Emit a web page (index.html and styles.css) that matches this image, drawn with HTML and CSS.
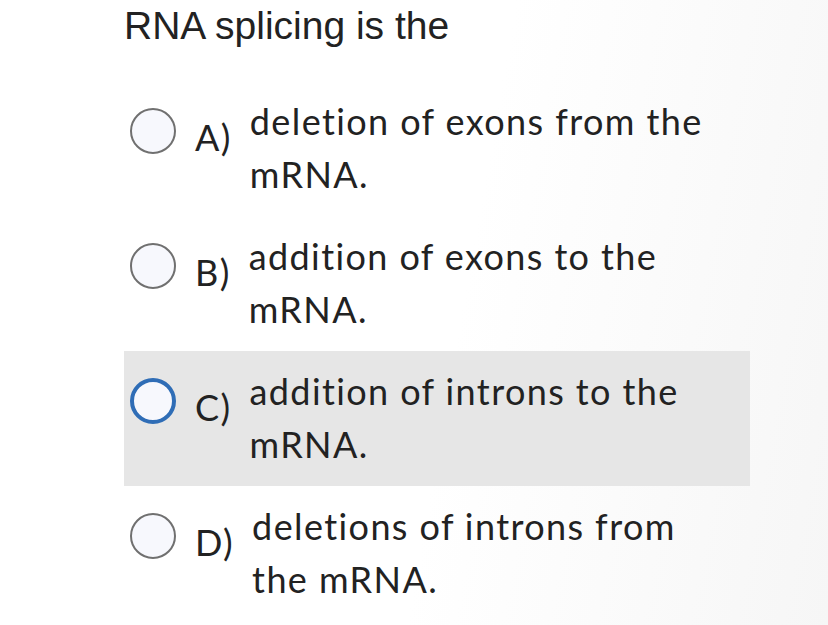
FILE: index.html
```html
<!DOCTYPE html>
<html>
<head>
<meta charset="utf-8">
<link rel="stylesheet" href="styles.css">
</head>
<body>
<div class="page">
  <h1 class="question">RNA splicing is the</h1>
  <div class="options">
    <div class="option">
      <span class="radio"></span>
      <span class="label">A)</span>
      <span class="text">deletion of exons from the<br>mRNA.</span>
    </div>
    <div class="option">
      <span class="radio"></span>
      <span class="label">B)</span>
      <span class="text">addition of exons to the<br>mRNA.</span>
    </div>
    <div class="option selected">
      <span class="radio"></span>
      <span class="label">C)</span>
      <span class="text">addition of introns to the<br>mRNA.</span>
    </div>
    <div class="option">
      <span class="radio"></span>
      <span class="label">D)</span>
      <span class="text">deletions of introns from<br>the mRNA.</span>
    </div>
  </div>
</div>
</body>
</html>
```
FILE: styles.css
```css
html, body {
  margin: 0;
  padding: 0;
}
body {
  width: 828px;
  height: 625px;
  overflow: hidden;
  background: linear-gradient(100deg, #ffffff 0%, #ffffff 55%, #f6f6f6 100%);
  color: #222;
}
.page {
  padding-left: 124px;
}
.question {
  margin: 3px 0 0 0;
  font-family: "Liberation Sans", Arial, sans-serif;
  font-weight: normal;
  font-size: 39px;
  line-height: 45px;
  height: 78px;
  color: #222;
}
.options {
  width: 626px;
  display: flex;
  flex-direction: column;
}
.option {
  height: 135px;
  display: flex;
  align-items: flex-start;
  font-family: Lato, "Open Sans", sans-serif;
  font-size: 36px;
  line-height: 53px;
  letter-spacing: 1.4px;
  color: #222;
}
.option.selected {
  background: #e6e6e6;
}
.radio {
  box-sizing: border-box;
  width: 46px;
  height: 46px;
  margin: 27px 0 0 6px;
  border-radius: 50%;
  border: 2px solid #707070;
  background: #f7f8fd;
  flex: none;
}
.selected .radio {
  border: 4px solid #2f6db6;
}
.label {
  margin: 30px 0 0 19px;
  flex: none;
}
.text {
  margin: 14px 0 0 18px;
}
```
